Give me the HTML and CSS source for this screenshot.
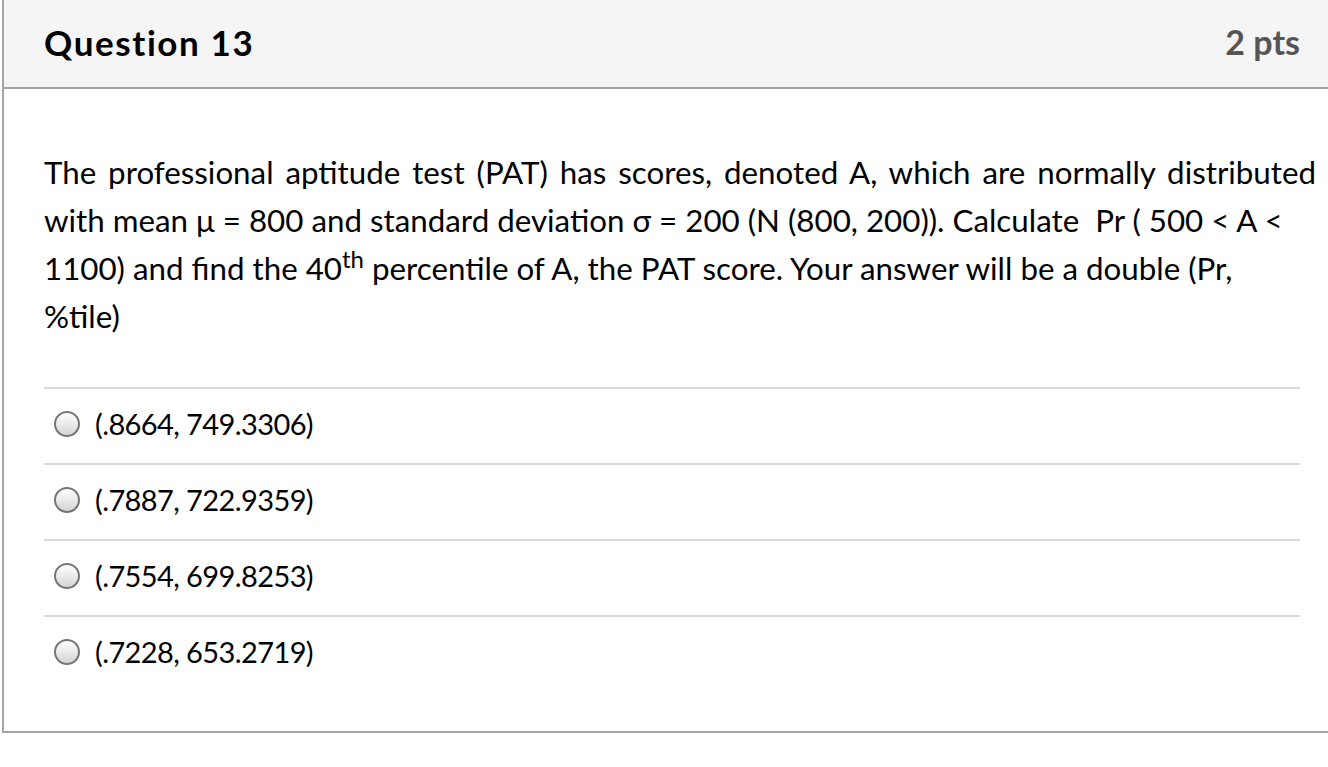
FILE: index.html
```html
<!DOCTYPE html>
<html lang="en">
<head>
<meta charset="utf-8">
<title>Question 13</title>
<link rel="stylesheet" href="styles.css">
</head>
<body>
<div class="question">
  <div class="header">
    <h2 class="title">Question 13</h2>
    <span class="points">2 pts</span>
  </div>
  <div class="content">
    <p class="text">The professional aptitude test (PAT) has scores, denoted A, which are normally distributed with mean μ = 800 and standard deviation σ = 200 (N (800, 200)). Calculate&nbsp; Pr ( 500 &lt; A &lt;<br>1100) and find the 40<sup>th</sup> percentile of A, the PAT score. Your answer will be a double (Pr,<br>%tile)</p>
    <div class="answers">
      <label class="answer"><span class="radio"></span><span class="label">(.8664, 749.3306)</span></label>
      <label class="answer"><span class="radio"></span><span class="label">(.7887, 722.9359)</span></label>
      <label class="answer"><span class="radio"></span><span class="label">(.7554, 699.8253)</span></label>
      <label class="answer"><span class="radio"></span><span class="label">(.7228, 653.2719)</span></label>
    </div>
  </div>
</div>
</body>
</html>
```
FILE: styles.css
```css
html, body {
  margin: 0;
  padding: 0;
  background: #fff;
}
body {
  font-family: Lato, "Noto Sans", sans-serif;
  color: #000;
}
.question {
  margin-left: 2px;
  border-left: 2px solid #a5a5a5;
  border-bottom: 2px solid #a5a5a5;
}
.header {
  box-sizing: border-box;
  height: 89px;
  background: #f5f5f5;
  border-bottom: 2px solid #a5a5a5;
  display: flex;
  align-items: center;
  justify-content: space-between;
  padding: 0 28px 4px 40px;
}
.title {
  margin: 0;
  font-size: 35px;
  letter-spacing: 1.6px;
  font-weight: 700;
  color: #000;
}
.points {
  font-size: 34px;
  font-weight: 700;
  color: #555;
}
.content {
  padding: 59px 12px 40px 40px;
}
.text {
  margin: 0 0 47px 0;
  font-size: 31.3px;
  line-height: 48px;
  text-align: justify;
}
.text sup {
  font-size: 24px;
  line-height: 0;
  vertical-align: 12px;
}
.answers {
  display: flex;
  flex-direction: column;
  margin-right: 16px;
}
.answer {
  box-sizing: border-box;
  display: flex;
  align-items: center;
  height: 76px;
  padding: 0 0 5px 10px;
  border-top: 2px solid #dcdcdc;
  font-size: 29px;
  letter-spacing: -0.6px;
}
.radio {
  width: 22px;
  height: 22px;
  border-radius: 50%;
  border: 2px solid #767676;
  background: linear-gradient(#ffffff, #d4d4d4);
  margin-right: 15px;
  flex: none;
}
```
